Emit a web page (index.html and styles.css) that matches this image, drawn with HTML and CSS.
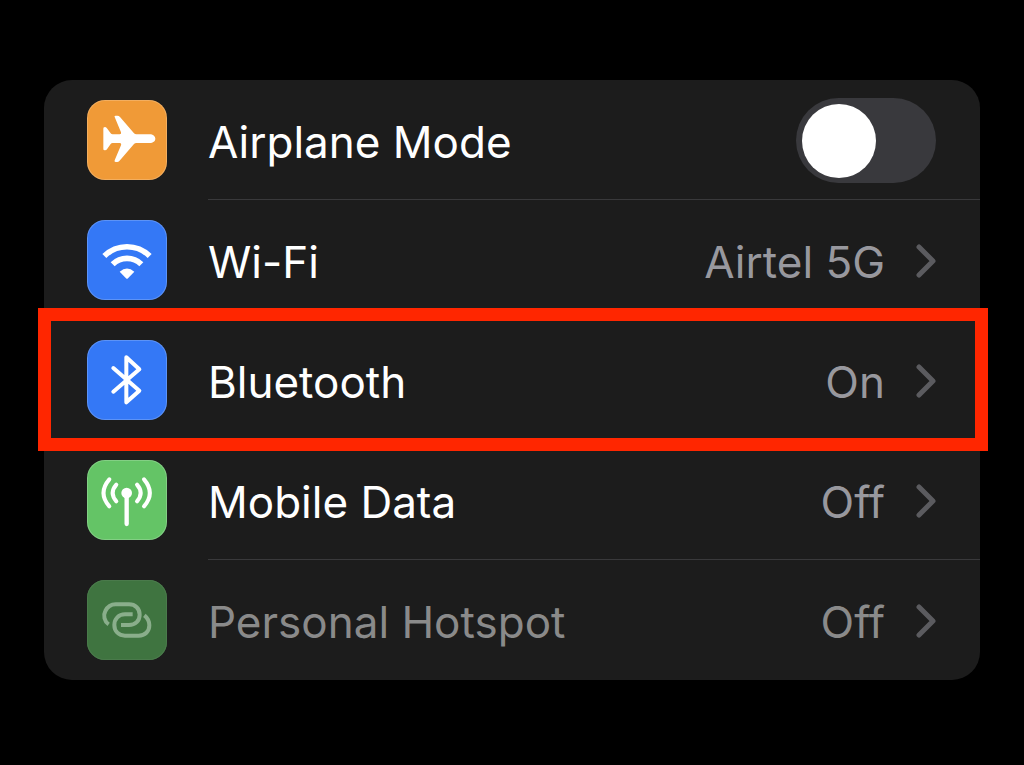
FILE: index.html
```html
<!DOCTYPE html>
<html lang="en">
<head>
    <meta charset="UTF-8">
    <meta name="viewport" content="width=device-width, initial-scale=1.0">
    <title>Settings</title>
    <link rel="stylesheet" href="styles.css">
</head>
<body>
    <main class="settings">
        <label class="row" for="airplane">
            <span class="icon orange">
                <svg viewBox="0 0 240 240" aria-hidden="true">
                    <path fill="#fff" d="M83 51Q81 47 86 47H91Q96 47 99 51L141 100Q144 103 148 103H188C198 103 205 109 205 116S198 129 188 129H148Q144 129 141 132L99 181Q96 186 91 186H86Q81 186 83 181L102 136Q104 129 98 129H77Q73 129 71 132L61 146Q58 151 54 151Q48 151 49 146V86Q48 81 54 81Q58 81 61 86L71 100Q73 103 77 103H98Q104 103 102 97Z"/>
                </svg>
            </span>
            <span class="content line">
                <span class="name">Airplane Mode</span>
                <input class="switch" type="checkbox" role="switch" id="airplane">
            </span>
        </label>

        <a class="row" href="#wifi">
            <span class="icon blue">
                <svg viewBox="0 0 240 240" aria-hidden="true">
                    <g fill="none" stroke="#fff" stroke-width="17">
                        <path d="M52 108A97 97 0 0 1 188 108"/>
                        <path d="M77 133A61 61 0 0 1 163 133"/>
                    </g>
                    <path fill="#fff" d="M98 155Q120 136 142 155L123 175Q120 178 117 175Z"/>
                </svg>
            </span>
            <span class="content">
                <span class="name">Wi-Fi</span>
                <span class="value">Airtel 5G</span>
                <svg class="chevron" viewBox="0 0 20 34" aria-hidden="true"><path d="M3 3L17 17L3 31"/></svg>
            </span>
        </a>

        <a class="row highlight" href="#bluetooth">
            <span class="icon blue">
                <svg viewBox="0 0 240 240" aria-hidden="true">
                    <path fill="none" stroke="#fff" stroke-width="12" stroke-linecap="round" stroke-linejoin="round" d="M79 84L157 152L118 187V52L157 88L79 155"/>
                </svg>
            </span>
            <span class="content">
                <span class="name">Bluetooth</span>
                <span class="value">On</span>
                <svg class="chevron" viewBox="0 0 20 34" aria-hidden="true"><path d="M3 3L17 17L3 31"/></svg>
            </span>
        </a>

        <a class="row" href="#mobile-data">
            <span class="icon green">
                <svg viewBox="0 0 240 240" aria-hidden="true">
                    <circle fill="#fff" cx="119" cy="99" r="16"/>
                    <g fill="none" stroke="#fff" stroke-width="12" stroke-linecap="round">
                        <path stroke-width="13" d="M119 99V192"/>
                        <path d="M88 74Q66 99 88 124M67 58Q32 99 67 139"/>
                        <path d="M150 74Q172 99 150 124M171 58Q206 99 171 139"/>
                    </g>
                </svg>
            </span>
            <span class="content line">
                <span class="name">Mobile Data</span>
                <span class="value">Off</span>
                <svg class="chevron" viewBox="0 0 20 34" aria-hidden="true"><path d="M3 3L17 17L3 31"/></svg>
            </span>
        </a>

        <a class="row disabled" href="#hotspot">
            <span class="icon dark-green">
                <svg viewBox="0 0 240 240" aria-hidden="true">
                    <g fill="none" stroke="#8aae8b" stroke-width="12">
                        <path d="M65 133C52 124 48 106 55 93C62 79 71 73 86 73H126C145 73 158 86 158 104S145 135 126 135H102"/>
                        <path d="M137 103H114C95 103 82 116 82 135S95 167 114 167H155C174 167 187 154 187 136C187 123 182 114 172 106"/>
                    </g>
                </svg>
            </span>
            <span class="content">
                <span class="name">Personal Hotspot</span>
                <span class="value">Off</span>
                <svg class="chevron" viewBox="0 0 20 34" aria-hidden="true"><path d="M3 3L17 17L3 31"/></svg>
            </span>
        </a>
    </main>
</body>
</html>
```
FILE: styles.css
```css
* {
    box-sizing: border-box;
}
body {
    margin: 0;
    padding: 80px 44px;
    background-color: #000;
    color: #fff;
    font-family: Inter, "Liberation Sans", sans-serif;
    font-size: 44px;
    line-height: 56px;
}
.settings {
    background-color: #1c1c1c;
    border-radius: 28px;
}
.row {
    display: flex;
    align-items: center;
    position: relative;
    min-height: 120px;
    padding-left: 43px;
    color: inherit;
    text-decoration: none;
}
.icon {
    flex: none;
    width: 80px;
    height: 80px;
    margin-right: 41px;
    border-radius: 18px;
    box-shadow: inset 0 0 0 1px rgba(255, 255, 255, 0.2);
}
.icon svg {
    display: block;
    width: 100%;
    height: 100%;
}
.orange {
    background-color: #f09a37;
}
.blue {
    background-color: #3478f6;
}
.green {
    background-color: #64c466;
}
.dark-green {
    background-color: #3f7440;
    box-shadow: inset 0 0 0 1px #4a7a4b;
}
.content {
    display: flex;
    align-items: center;
    flex: 1;
    align-self: stretch;
    padding-top: 2px;
    padding-right: 44px;
}
.line {
    border-bottom: 1px solid #39393b;
}
.name,
.value {
    padding-top: 2px;
}
.name {
    flex: 1;
}
.value {
    margin-right: 31px;
    color: #98989e;
}
.chevron {
    width: 20px;
    height: 34px;
    fill: none;
    stroke: #5b5b5f;
    stroke-width: 5;
    stroke-linecap: round;
    stroke-linejoin: round;
}
.disabled .name,
.disabled .value {
    color: #8a8a8a;
}
.switch {
    appearance: none;
    width: 140px;
    height: 85px;
    margin: 0;
    padding: 6px;
    border-radius: 43px;
    background-color: #39393d;
}
.switch::before {
    content: "";
    display: block;
    width: 74px;
    height: 74px;
    border-radius: 50%;
    background-color: #fff;
}
.switch:checked {
    background-color: #64c466;
}
.switch:checked::before {
    margin-left: auto;
}
/* red marker around the row */
.highlight::after {
    content: "";
    position: absolute;
    inset: -12px -8px -11px -6px;
    border: 13px solid #ff2600;
}
```
